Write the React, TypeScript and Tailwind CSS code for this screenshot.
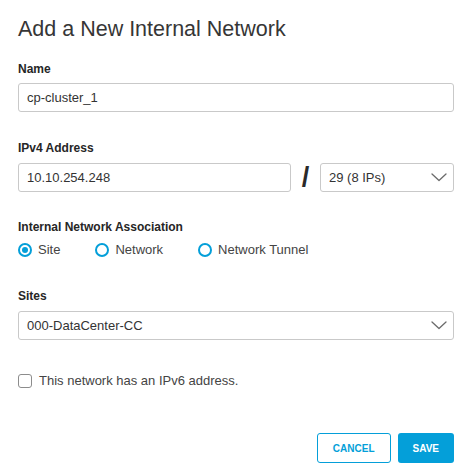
import { useState } from "react";

const BLUE = "#049fd9";

function Chevron() {
  return (
    <svg width="16" height="9" viewBox="0 0 16 9" fill="none" className="shrink-0">
      <polyline points="1,1 8,7.5 15,1" stroke="#6b6b6b" strokeWidth="1.3" strokeLinejoin="round" strokeLinecap="round" />
    </svg>
  );
}

function Label({ children, className = "" }: { children: React.ReactNode; className?: string }) {
  return <div className={`text-[12px] font-bold leading-[16px] text-[#262626] ${className}`}>{children}</div>;
}

function Field({ value, className = "" }: { value: string; className?: string }) {
  return (
    <div
      className={`flex h-[29px] items-center rounded-[3px] border border-[#c9c9c9] pl-[8px] text-[13px] text-[#333] ${className}`}
    >
      {value}
    </div>
  );
}

function Select({ value, className = "" }: { value: string; className?: string }) {
  return (
    <div
      className={`flex h-[29px] items-center justify-between rounded-[3px] border border-[#c9c9c9] pl-[8px] pr-[6px] text-[13px] text-[#333] ${className}`}
    >
      <span>{value}</span>
      <Chevron />
    </div>
  );
}

function Radio({ label, checked, onClick }: { label: string; checked: boolean; onClick: () => void }) {
  return (
    <button type="button" onClick={onClick} className="flex h-[16px] items-center gap-[6px]">
      <span className="flex h-[14px] w-[14px] items-center justify-center rounded-full border-2 border-[#049fd9]">
        {checked && <span className="h-[6px] w-[6px] rounded-full bg-[#049fd9]" />}
      </span>
      <span className="text-[13px] leading-[16px] text-[#444]">{label}</span>
    </button>
  );
}

export default function App() {
  const [assoc, setAssoc] = useState("Site");
  const [ipv6, setIpv6] = useState(false);

  return (
    <div
      className="h-[474px] w-[474px] overflow-hidden bg-white pl-[18px] pr-[20px] pt-[16px]"
      style={{ fontFamily: '"Liberation Sans", Arial, sans-serif' }}
    >
      <h1 className="text-[21.5px] font-normal leading-[26px] text-[#363636]">Add a New Internal Network</h1>

      <Label className="mt-[19px]">Name</Label>
      <Field value="cp-cluster_1" className="mt-[6px]" />

      <Label className="mt-[28px]">IPv4 Address</Label>
      <div className="mt-[7px] flex items-center">
        <Field value="10.10.254.248" className="w-[273px]" />
        <span className="flex w-[29px] justify-center text-[27px] font-bold leading-none text-[#2a2a2a]">/</span>
        <Select value="29 (8 IPs)" className="flex-1" />
      </div>

      <Label className="mt-[27px]">Internal Network Association</Label>
      <div className="mt-[7px] flex gap-[35px]">
        {["Site", "Network", "Network Tunnel"].map((o) => (
          <Radio key={o} label={o} checked={assoc === o} onClick={() => setAssoc(o)} />
        ))}
      </div>

      <Label className="mt-[30px]">Sites</Label>
      <Select value="000-DataCenter-CC" className="mt-[7px]" />

      <label className="mt-[33px] flex h-[16px] cursor-pointer items-center gap-[7px]">
        <span
          onClick={() => setIpv6(!ipv6)}
          className="flex h-[14px] w-[14px] items-center justify-center rounded-[3px] border-[1.5px] border-[#8c8c8c]"
        >
          {ipv6 && <span className="h-[6px] w-[6px] bg-[#049fd9]" />}
        </span>
        <span className="text-[13px] leading-[16px] text-[#444]">This network has an IPv6 address.</span>
      </label>

      <div className="mt-[44px] flex justify-end gap-[7px]">
        <button
          type="button"
          className="h-[30px] rounded-[3px] border border-[#049fd9] bg-white px-[15px] text-[10px] font-bold text-[#049fd9]"
        >
          CANCEL
        </button>
        <button
          type="button"
          className="h-[30px] rounded-[3px] px-[15px] text-[10px] font-bold text-white"
          style={{ backgroundColor: BLUE }}
        >
          SAVE
        </button>
      </div>
    </div>
  );
}
